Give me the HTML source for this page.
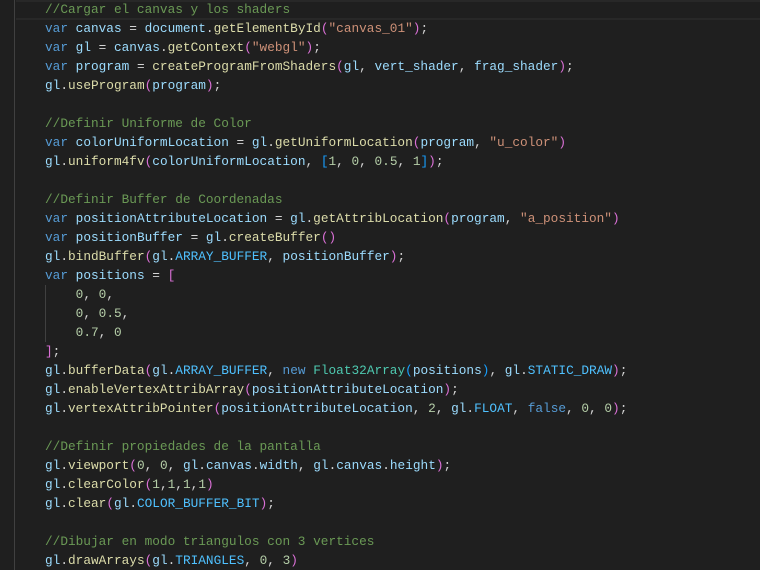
<!DOCTYPE html>
<html><head><meta charset="utf-8"><style>
html,body{margin:0;padding:0;background:#1f1f1f;width:760px;height:570px;overflow:hidden}
#c{position:absolute;left:45px;top:-0.5px;font-family:"Liberation Mono",monospace;font-size:12.77px;line-height:19px;color:#d4d4d4;white-space:pre}
.hl{position:absolute;left:16px;top:0;width:744px;height:16px;border-top:2px solid #282828;border-bottom:2px solid #282828}
.g{position:absolute;width:1px;background:#404040}
.c{color:#6a9955}.k{color:#569cd6}.v{color:#9cdcfe}.f{color:#dcdcaa}.s{color:#ce9178}.n{color:#b5cea8}
.p{color:#da70d6}.b{color:#179fff}.y{color:#ffd700}.t{color:#4ec9b0}.o{color:#4fc1ff}
</style></head><body>
<div class="hl"></div>
<div class="g" style="left:14px;top:0;height:570px"></div>
<div class="g" style="left:45px;top:285px;height:57px"></div>
<div id="c"><span class="c">//Cargar el canvas y los shaders</span>
<span class="k">var</span> <span class="v">canvas</span> = <span class="v">document</span>.<span class="f">getElementById</span><span class="p">(</span><span class="s">"canvas_01"</span><span class="p">)</span>;
<span class="k">var</span> <span class="v">gl</span> = <span class="v">canvas</span>.<span class="f">getContext</span><span class="p">(</span><span class="s">"webgl"</span><span class="p">)</span>;
<span class="k">var</span> <span class="v">program</span> = <span class="f">createProgramFromShaders</span><span class="p">(</span><span class="v">gl</span>, <span class="v">vert_shader</span>, <span class="v">frag_shader</span><span class="p">)</span>;
<span class="v">gl</span>.<span class="f">useProgram</span><span class="p">(</span><span class="v">program</span><span class="p">)</span>;

<span class="c">//Definir Uniforme de Color</span>
<span class="k">var</span> <span class="v">colorUniformLocation</span> = <span class="v">gl</span>.<span class="f">getUniformLocation</span><span class="p">(</span><span class="v">program</span>, <span class="s">"u_color"</span><span class="p">)</span>
<span class="v">gl</span>.<span class="f">uniform4fv</span><span class="p">(</span><span class="v">colorUniformLocation</span>, <span class="b">[</span><span class="n">1</span>, <span class="n">0</span>, <span class="n">0.5</span>, <span class="n">1</span><span class="b">]</span><span class="p">)</span>;

<span class="c">//Definir Buffer de Coordenadas</span>
<span class="k">var</span> <span class="v">positionAttributeLocation</span> = <span class="v">gl</span>.<span class="f">getAttribLocation</span><span class="p">(</span><span class="v">program</span>, <span class="s">"a_position"</span><span class="p">)</span>
<span class="k">var</span> <span class="v">positionBuffer</span> = <span class="v">gl</span>.<span class="f">createBuffer</span><span class="p">()</span>
<span class="v">gl</span>.<span class="f">bindBuffer</span><span class="p">(</span><span class="v">gl</span>.<span class="o">ARRAY_BUFFER</span>, <span class="v">positionBuffer</span><span class="p">)</span>;
<span class="k">var</span> <span class="v">positions</span> = <span class="p">[</span>
    <span class="n">0</span>, <span class="n">0</span>,
    <span class="n">0</span>, <span class="n">0.5</span>,
    <span class="n">0.7</span>, <span class="n">0</span>
<span class="p">]</span>;
<span class="v">gl</span>.<span class="f">bufferData</span><span class="p">(</span><span class="v">gl</span>.<span class="o">ARRAY_BUFFER</span>, <span class="k">new</span> <span class="t">Float32Array</span><span class="b">(</span><span class="v">positions</span><span class="b">)</span>, <span class="v">gl</span>.<span class="o">STATIC_DRAW</span><span class="p">)</span>;
<span class="v">gl</span>.<span class="f">enableVertexAttribArray</span><span class="p">(</span><span class="v">positionAttributeLocation</span><span class="p">)</span>;
<span class="v">gl</span>.<span class="f">vertexAttribPointer</span><span class="p">(</span><span class="v">positionAttributeLocation</span>, <span class="n">2</span>, <span class="v">gl</span>.<span class="o">FLOAT</span>, <span class="k">false</span>, <span class="n">0</span>, <span class="n">0</span><span class="p">)</span>;

<span class="c">//Definir propiedades de la pantalla</span>
<span class="v">gl</span>.<span class="f">viewport</span><span class="p">(</span><span class="n">0</span>, <span class="n">0</span>, <span class="v">gl</span>.<span class="v">canvas</span>.<span class="v">width</span>, <span class="v">gl</span>.<span class="v">canvas</span>.<span class="v">height</span><span class="p">)</span>;
<span class="v">gl</span>.<span class="f">clearColor</span><span class="p">(</span><span class="n">1</span>,<span class="n">1</span>,<span class="n">1</span>,<span class="n">1</span><span class="p">)</span>
<span class="v">gl</span>.<span class="f">clear</span><span class="p">(</span><span class="v">gl</span>.<span class="o">COLOR_BUFFER_BIT</span><span class="p">)</span>;

<span class="c">//Dibujar en modo triangulos con 3 vertices</span>
<span class="v">gl</span>.<span class="f">drawArrays</span><span class="p">(</span><span class="v">gl</span>.<span class="o">TRIANGLES</span>, <span class="n">0</span>, <span class="n">3</span><span class="p">)</span></div>
</body></html>
